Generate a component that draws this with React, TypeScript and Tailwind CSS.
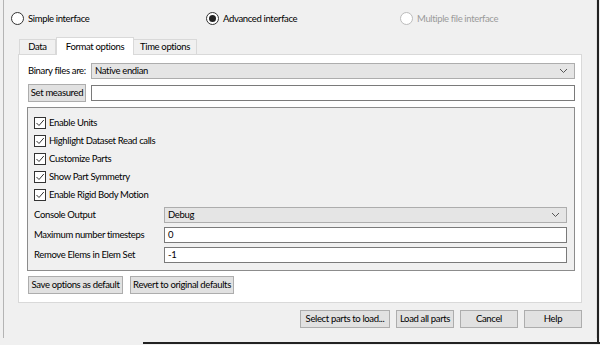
import React from 'react';

const font = { fontFamily: 'Lato, "Noto Sans", sans-serif' };

function Radio({ label, checked, disabled }: { label: string; checked?: boolean; disabled?: boolean }) {
    return (
        <div className="flex items-center gap-[4px]">
            <span className={`w-[13px] h-[13px] rounded-full border bg-white flex items-center justify-center ${disabled ? "border-[#bcbcbc]" : "border-[#333]"}`}>
                {checked && <span className="w-[7px] h-[7px] rounded-full bg-[#222]"></span>}
            </span>
            <span className={disabled ? "text-[#9a9a9a]" : "text-black"}>{label}</span>
        </div>
    );
}

function Check({ label }: { label: string }) {
    return (
        <div className="h-[18px] flex items-center gap-[3px]">
            <span className="w-[12px] h-[12px] border border-[#333] bg-white flex items-center justify-center">
                <svg width="10" height="10" viewBox="0 0 10 10">
                    <path d="M1.5 5 L4 7.5 L8.8 2" fill="none" stroke="#333" strokeWidth="1" />
                </svg>
            </span>
            <span>{label}</span>
        </div>
    );
}

function Chevron() {
    return (
        <svg width="9" height="6" viewBox="0 0 9 6">
            <path d="M1 1 L4.5 4.5 L8 1" fill="none" stroke="#555" strokeWidth="1" />
        </svg>
    );
}

function Combo({ value }: { value: string }) {
    return (
        <div className="flex-1 h-[16px] border border-[#adadad] bg-[#e5e5e5] flex items-center justify-between pl-[3px] pr-[6px]">
            <span>{value}</span>
            <Chevron />
        </div>
    );
}

function Field({ value }: { value: string }) {
    return (
        <div className="flex-1 h-[16px] border border-[#7a7a7a] bg-white flex items-center pl-[3px]">
            <span>{value}</span>
        </div>
    );
}

function Btn({ label, w }: { label: string; w: string }) {
    return (
        <div className={`${w} shrink-0 h-[18px] border border-[#adadad] bg-[#e1e1e1] flex items-center justify-center`}>
            {label}
        </div>
    );
}

export default function App() {
    return (
        <div className="w-[600px] h-[345px] bg-[#f0f0f0] text-[9.5px] tracking-[-0.35px] leading-none text-black whitespace-nowrap relative overflow-hidden" style={font}>
            <div className="ml-[3px] w-[594px] h-[338px] border-l border-[#b4b4b4] border-r border-r-[#e0e0e0] flex flex-col">
                <div className="h-[36px] flex items-center pt-[1px]">
                    <div className="w-[202px] pl-[7px]"><Radio label="Simple interface" /></div>
                    <div className="w-[194px]"><Radio label="Advanced interface" checked /></div>
                    <div><Radio label="Multiple file interface" disabled /></div>
                </div>
                <div className="flex items-end h-[18px] pl-[15px]">
                    <div className="w-[37px] h-[15px] border border-b-0 border-[#d9d9d9] flex items-center justify-center">Data</div>
                    <div className="w-[78px] h-[18px] bg-white border border-b-0 border-[#d9d9d9] flex items-center justify-center -mb-[1px] relative z-10">Format options</div>
                    <div className="w-[63px] h-[15px] border border-b-0 border-l-0 border-[#d9d9d9] flex items-center justify-center">Time options</div>
                </div>
                <div className="ml-[14px] w-[564px] h-[249px] bg-white border border-[#d9d9d9] pl-[9px] pr-[6px] pt-[7px] flex flex-col">
                    <div className="flex items-center h-[17px]">
                        <span className="w-[63px] shrink-0">Binary files are:</span>
                        <Combo value="Native endian" />
                    </div>
                    <div className="flex items-center h-[18px] mt-[5px] gap-[5px]">
                        <Btn label="Set measured" w="w-[58px]" />
                        <Field value="" />
                    </div>
                    <div className="mt-[5px] -ml-[1px] h-[164px] border border-[#8c8c8c] bg-[#f0f0f0] pl-[6px] pr-[7px] pt-[6px] flex flex-col">
                        <Check label="Enable Units" />
                        <Check label="Highlight Dataset Read calls" />
                        <Check label="Customize Parts" />
                        <Check label="Show Part Symmetry" />
                        <Check label="Enable Rigid Body Motion" />
                        <div className="flex items-center mt-[3px]">
                            <span className="w-[130px] shrink-0">Console Output</span>
                            <Combo value="Debug" />
                        </div>
                        <div className="flex items-center mt-[4px]">
                            <span className="w-[130px] shrink-0">Maximum number timesteps</span>
                            <Field value="0" />
                        </div>
                        <div className="flex items-center mt-[4px]">
                            <span className="w-[130px] shrink-0">Remove Elems in Elem Set</span>
                            <Field value="-1" />
                        </div>
                    </div>
                    <div className="flex gap-[7px] mt-[5px]">
                        <Btn label="Save options as default" w="w-[95px]" />
                        <Btn label="Revert to original defaults" w="w-[104px]" />
                    </div>
                </div>
                <div className="flex mt-[7px] pl-[296px] gap-[6px]">
                    <Btn label="Select parts to load..." w="w-[90px]" />
                    <Btn label="Load all parts" w="w-[58px]" />
                    <Btn label="Cancel" w="w-[58px]" />
                    <Btn label="Help" w="w-[58px]" />
                </div>
            </div>
            <div className="absolute left-[143px] top-[342px] w-[457px] h-[2px] bg-[#222]"></div>
            <div className="absolute left-[597px] top-0 w-[2px] h-[344px] bg-[#222]"></div>
        </div>
    );
}
